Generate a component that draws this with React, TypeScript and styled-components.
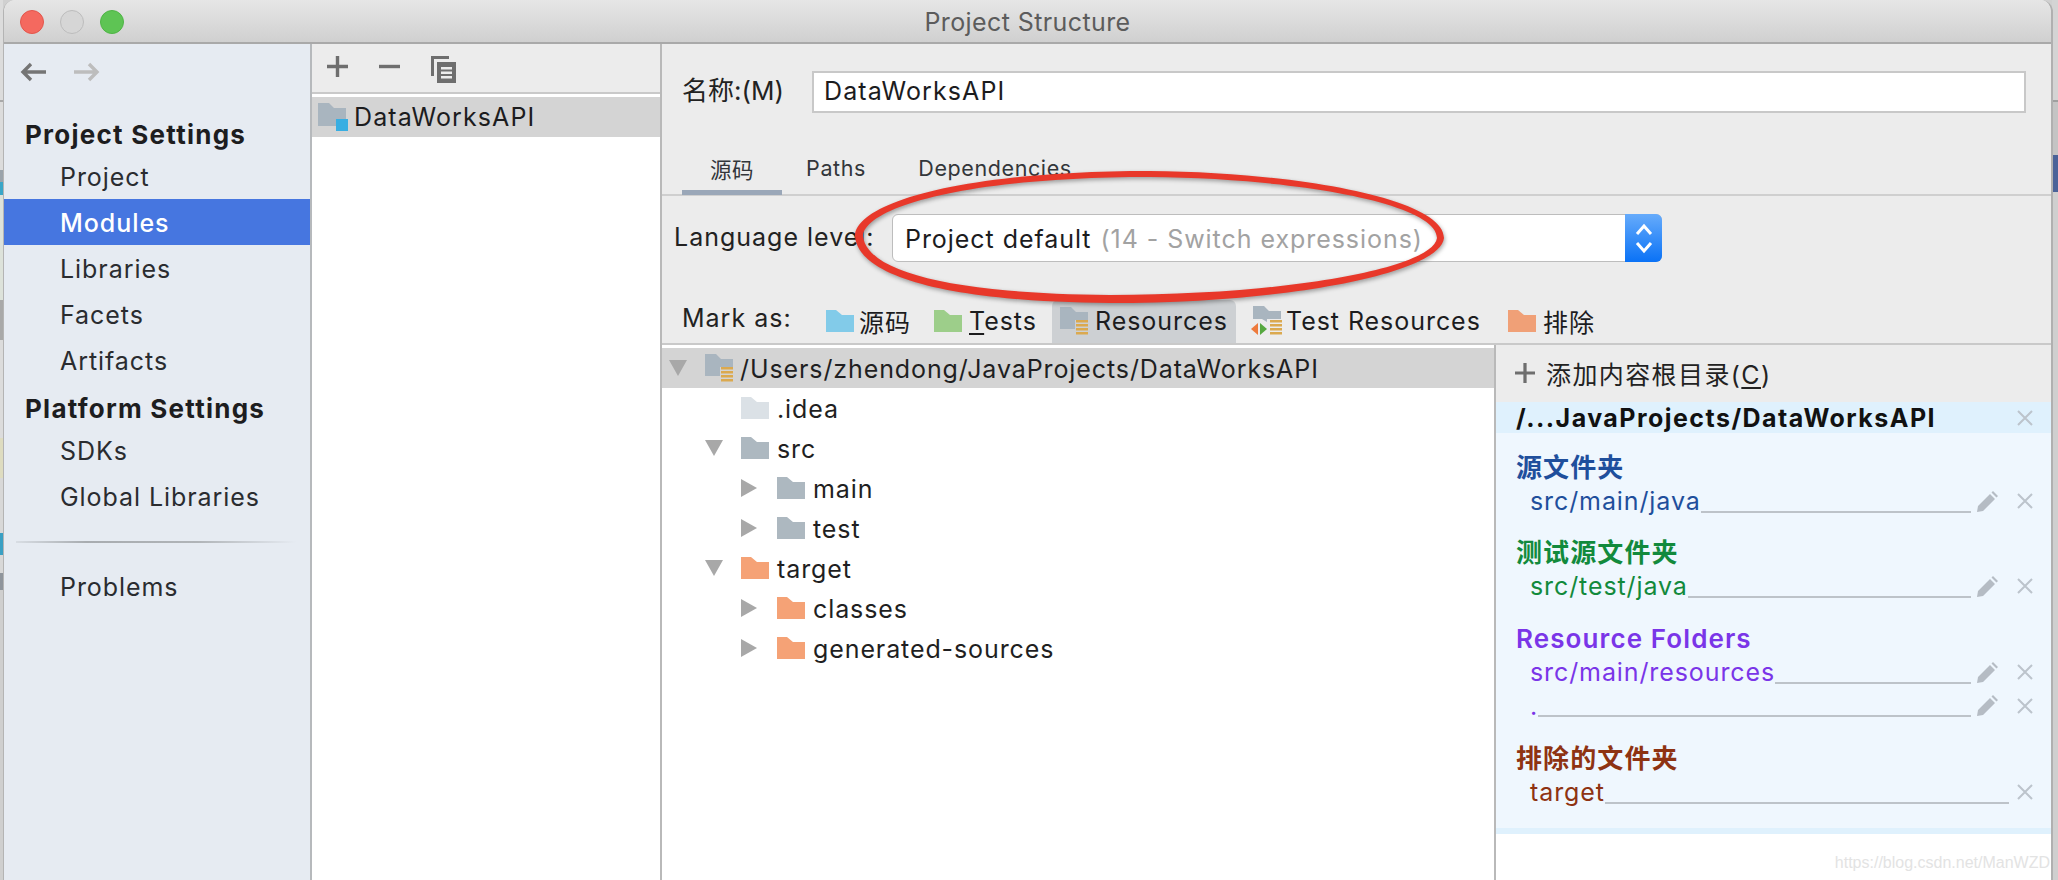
import React from "react";
import styled, { createGlobalStyle } from "styled-components";

const Global = createGlobalStyle`
  html, body { margin: 0; padding: 0; background: #d0d0d0; overflow: hidden; }
  * { box-sizing: border-box; }
  body { font-family: Inter, "Noto Sans CJK SC", "Liberation Sans", sans-serif; color: #1c1c1e; }
`;

const Desktop = styled.div`
  width: 2058px;
  height: 880px;
  overflow: hidden;
  padding: 0 5px 0 3px;
  background:
    linear-gradient(to bottom,
      #dcdcdc 0 100px, #a9a9a9 100px 102px, #dcdcdc 102px 170px, #9aa3ab 170px 182px, #3aa6c8 182px 195px,
      #dde2da 195px 300px, #a9a9a9 300px 340px, #dcdcdc 340px 438px, #dedcc0 438px 478px, #d8d8d8 478px 533px,
      #3aa0c4 533px 555px, #d8d8d8 555px 573px, #8f959c 573px 590px, #cfcfcf 590px) left / 3px 100% no-repeat,
    linear-gradient(to bottom,
      #d4d4d4 0 100px, #9f9f9f 100px 102px, #c4c4c4 102px 155px, #4a6298 155px 192px, #cfcfcf 192px) right / 6px 100% no-repeat;
`;

const Window = styled.div`
  position: relative;
  width: 100%;
  height: 880px;
  display: flex;
  flex-direction: column;
  background: #ececec;
  border-left: 1px solid #b4b4b4;
  border-right: 2px solid #b0b0b0;
  border-radius: 12px 12px 0 0;
  overflow: hidden;
`;

const TitleBar = styled.div`
  position: relative;
  flex: none;
  height: 44px;
  display: flex;
  align-items: center;
  justify-content: center;
  background: linear-gradient(#e6e6e6, #d0d0d0);
  border-bottom: 2px solid #a9a9a9;
`;

const TitleText = styled.span`
  padding-top: 2px;
  font-size: 25px;
  line-height: 42px;
  color: #5c5c5c;
  letter-spacing: 0.4px;
`;

const Lights = styled.div`
  position: absolute;
  left: 16px;
  top: 10px;
  display: flex;
  gap: 16px;
`;

const Light = styled.span<{ $c: string; $b: string }>`
  width: 24px;
  height: 24px;
  border-radius: 50%;
  background: ${(p) => p.$c};
  border: 1px solid ${(p) => p.$b};
`;

const Body = styled.div`
  flex: 1;
  min-height: 0;
  display: flex;
`;

const Sidebar = styled.nav`
  flex: none;
  width: 308px;
  background: #e6ebf2;
  border-right: 2px solid #b6b9bc;
  display: flex;
  flex-direction: column;
`;

const NavArrows = styled.div`
  flex: none;
  height: 68px;
  padding: 18px 0 0 16px;
  display: flex;
  gap: 28px;
  align-items: flex-start;
`;

const GroupTitle = styled.div<{ $h: number; $pt: number }>`
  height: ${(p) => p.$h}px;
  padding: ${(p) => p.$pt}px 0 0 21px;
  font-size: 26px;
  line-height: 36px;
  font-weight: 700;
  color: #1d1d1f;
  letter-spacing: 1.25px;
`;

const NavItem = styled.div<{ $active?: boolean }>`
  height: 46px;
  padding-left: 56px;
  line-height: 48px;
  font-size: 25px;
  letter-spacing: 0.94px;
  color: ${(p) => (p.$active ? "#fff" : "#2a2c30")};
  background: ${(p) => (p.$active ? "#4676e0" : "transparent")};
  font-weight: ${(p) => (p.$active ? 500 : 400)};
`;

const NavDivider = styled.div`
  height: 2px;
  margin: 22px 14px 20px 12px;
  background: linear-gradient(to right, rgba(160,165,170,0.2), #a8acb0 25%, #b0b4b8 65%, rgba(160,165,170,0));
`;

const ModulePanel = styled.section`
  flex: none;
  width: 350px;
  background: #fff;
  border-right: 2px solid #b9b9b9;
  display: flex;
  flex-direction: column;
`;

const ModuleToolbar = styled.div`
  flex: none;
  height: 50px;
  padding: 12px 0 0 15px;
  display: flex;
  align-items: flex-start;
  gap: 31px;
  background: #ececec;
  border-bottom: 2px solid #c9c9c9;
`;

const ModuleRow = styled.div`
  margin-top: 3px;
  height: 40px;
  padding-left: 6px;
  display: flex;
  align-items: center;
  gap: 6px;
  background: #d4d4d4;
  font-size: 25px;
  letter-spacing: 1.1px;
`;

const Editor = styled.section`
  flex: 1;
  min-width: 0;
  display: flex;
  flex-direction: column;
`;

const NameRow = styled.div`
  flex: none;
  height: 96px;
  padding: 27px 25px 0 20px;
  display: flex;
  align-items: flex-start;
  gap: 28px;
`;

const FieldLabel = styled.span`
  width: 102px;
  font-size: 26px;
  line-height: 40px;
  white-space: nowrap;
  color: #222;
`;

const NameInput = styled.div`
  flex: 1;
  height: 42px;
  padding-left: 10px;
  line-height: 36px;
  font-size: 25px;
  letter-spacing: 1.1px;
  background: #fff;
  border: 2px solid #c8c8c8;
`;

const TabBar = styled.div`
  flex: none;
  height: 56px;
  padding-left: 20px;
  display: flex;
  align-items: stretch;
  border-bottom: 2px solid #cfcfcf;
`;

const Tab = styled.div<{ $active?: boolean; $w: number }>`
  width: ${(p) => p.$w}px;
  height: 55px;
  display: flex;
  justify-content: center;
  align-items: center;
  padding-top: 6px;
  font-size: 21.5px;
  letter-spacing: 0.6px;
  color: #33363a;
  border-bottom: 5px solid ${(p) => (p.$active ? "#9aa7b8" : "transparent")};
`;

const LanguageRow = styled.div`
  flex: none;
  height: 104px;
  padding: 18px 0 0 12px;
  display: flex;
  align-items: flex-start;
  gap: 19px;
`;

const LangLabel = styled.span`
  width: 199px;
  font-size: 25px;
  line-height: 46px;
  letter-spacing: 1px;
  white-space: nowrap;
  color: #222;
`;

const Select = styled.div`
  width: 770px;
  height: 48px;
  display: flex;
  background: #fff;
  border: 1px solid #bdbdbd;
  border-radius: 6px;
`;

const SelectText = styled.div`
  flex: 1;
  padding-left: 12px;
  line-height: 48px;
  font-size: 25px;
  letter-spacing: 0.95px;
  white-space: nowrap;
`;

const Hint = styled.span`
  margin-left: 9px;
  color: #a2a2a2;
`;

const Stepper = styled.div`
  flex: none;
  width: 37px;
  margin: -1px -1px -1px 0;
  display: flex;
  align-items: center;
  justify-content: center;
  background: linear-gradient(#66abfb, #0a72f6);
  border-radius: 0 6px 6px 0;
`;

const MarkRow = styled.div`
  flex: none;
  height: 45px;
  padding-left: 20px;
  display: flex;
  align-items: stretch;
  border-bottom: 2px solid #c9c9c9;
`;

const MarkLabel = styled.span`
  width: 136px;
  font-size: 25px;
  line-height: 36px;
  letter-spacing: 1px;
  white-space: nowrap;
  color: #222;
`;

const MarkItem = styled.div<{ $active?: boolean; $w: number; $inset?: number; $gap?: number }>`
  width: ${(p) => p.$w}px;
  height: 43px;
  padding: 0 0 2px ${(p) => p.$inset ?? 8}px;
  display: flex;
  align-items: center;
  gap: ${(p) => p.$gap ?? 7}px;
  font-size: 25px;
  letter-spacing: 0.95px;
  white-space: nowrap;
  background: ${(p) => (p.$active ? "#cdd0d3" : "transparent")};
  border-radius: ${(p) => (p.$active ? "6px 6px 0 0" : "0")};
  svg { flex: none; }
`;

const Mnemonic = styled.span`
  text-decoration: underline;
  text-underline-offset: 3px;
  text-decoration-thickness: 2px;
`;

const Split = styled.div`
  flex: 1;
  min-height: 0;
  display: flex;
  background: #fff;
`;

const Tree = styled.div`
  flex: none;
  width: 832px;
  padding-top: 3px;
`;

const TreeRow = styled.div<{ $depth: number; $selected?: boolean }>`
  height: 40px;
  padding-left: ${(p) => 7 + p.$depth * 36}px;
  display: flex;
  align-items: center;
  font-size: 25px;
  letter-spacing: 0.9px;
  color: #1f1f22;
  background: ${(p) => (p.$selected ? "#d4d4d4" : "transparent")};
`;

const ArrowSlot = styled.span`
  flex: none;
  width: 36px;
  display: flex;
  align-items: center;
`;

const TreeLabel = styled.span<{ $gap?: number }>`
  margin-left: ${(p) => p.$gap ?? 8}px;
  padding-top: 2px;
  white-space: nowrap;
`;

const ContentPane = styled.aside`
  flex: 1;
  min-width: 0;
  display: flex;
  flex-direction: column;
  border-left: 2px solid #b9b9b9;
`;

const AddRoot = styled.div`
  flex: none;
  height: 57px;
  padding: 0 0 2px 19px;
  display: flex;
  align-items: center;
  gap: 11px;
  background: #ececec;
  font-size: 25px;
  letter-spacing: 1.4px;
  color: #222;
`;

const RootHeader = styled.div`
  flex: none;
  height: 31px;
  padding-left: 20px;
  display: flex;
  align-items: center;
  justify-content: space-between;
  background: #dff1fd;
  font-size: 25px;
  font-weight: 700;
  letter-spacing: 1.45px;
  color: #111;
`;

const RootClose = styled.span`
  margin-right: 18px;
  display: flex;
`;

const Roots = styled.div`
  flex: none;
  height: 401px;
  padding: 17px 0 0 20px;
  background: #eff7fe;
  border-bottom: 6px solid #dff1fd;
`;

const KindTitle = styled.div<{ $color: string; $gap: number }>`
  height: 34px;
  margin-top: ${(p) => p.$gap}px;
  line-height: 36px;
  font-size: 26px;
  font-weight: 600;
  letter-spacing: 1.1px;
  color: ${(p) => p.$color};
`;

const PathRow = styled.div<{ $color: string; $h?: number }>`
  height: ${(p) => p.$h ?? 34}px;
  padding-left: 14px;
  display: flex;
  align-items: center;
  font-size: 25px;
  letter-spacing: 0.9px;
  color: ${(p) => p.$color};
`;

const Leader = styled.span`
  flex: 1;
  align-self: flex-end;
  margin-bottom: 5px;
  border-bottom: 2px solid #bdc3c9;
`;

const PencilSlot = styled.span`
  flex: none;
  margin-left: 6px;
  display: flex;
`;

const CloseSlot = styled.span<{ $gap: number }>`
  flex: none;
  margin: 0 18px 0 ${(p) => p.$gap}px;
  display: flex;
`;

const Watermark = styled.div`
  position: absolute;
  right: 1px;
  bottom: 8px;
  font-family: "Liberation Sans", sans-serif;
  font-size: 16px;
  color: #e3e3e3;
`;

const Annotation = styled.svg`
  position: absolute;
  left: -4px;
  top: 0;
  pointer-events: none;
  filter: drop-shadow(1px 2px 2px rgba(0, 0, 0, 0.35));
`;

const Folder = ({ c }: { c: string }) => (
  <svg width="28" height="22" viewBox="0 0 28 22">
    <path d="M0 22V0h10l6 5h12v17z" fill={c} />
  </svg>
);

const Bars = ({ x, y }: { x: number; y: number }) => (
  <g fill="#dba94f">
    <rect x={x} y={y} width="12" height="2.5" />
    <rect x={x} y={y + 4} width="12" height="2.5" />
    <rect x={x} y={y + 8} width="12" height="2.5" />
    <rect x={x} y={y + 12} width="12" height="2.5" />
  </g>
);

const ModuleFolder = () => (
  <svg width="30" height="28" viewBox="0 0 30 28">
    <path d="M0 23V0h11l5 5h12v18z" fill="#a9b5bf" />
    <rect x="18" y="16" width="12" height="12" fill="#38aee2" />
  </svg>
);

const ResourceFolder = () => (
  <svg width="30" height="28" viewBox="0 0 30 28">
    <path d="M0 22V0h11l5 5h12v8H15v9z" fill="#a9b5bf" />
    <Bars x={16} y={13} />
  </svg>
);

const TestResourceFolder = () => (
  <svg width="32" height="30" viewBox="0 0 32 30">
    <path d="M2 22V0h11l5 5h12v8H16v3l-5-3H2z" fill="#a9b5bf" />
    <path d="M7 17v12L0 23z" fill="#ee7a3c" />
    <path d="M9 17v12l7-6z" fill="#56a83f" />
    <Bars x={19} y={14} />
  </svg>
);

const Back = ({ c }: { c: string }) => (
  <svg width="26" height="20" viewBox="0 0 26 20">
    <path d="M26 10H3M11 2l-8 8 8 8" fill="none" stroke={c} strokeWidth="3.4" />
  </svg>
);

const Forward = ({ c }: { c: string }) => (
  <svg width="26" height="20" viewBox="0 0 26 20">
    <path d="M0 10h23M15 2l8 8-8 8" fill="none" stroke={c} strokeWidth="3.4" />
  </svg>
);

const Plus = ({ s = 21, c = "#6e6e6e" }: { s?: number; c?: string }) => (
  <svg width={s} height={s} viewBox="0 0 21 21">
    <path d="M10.5 0v21M0 10.5h21" stroke={c} strokeWidth="3.4" />
  </svg>
);

const MinusIcon = () => (
  <svg width="21" height="21" viewBox="0 0 21 21">
    <path d="M0 10.5h21" stroke="#6e6e6e" strokeWidth="3.4" />
  </svg>
);

const CopyIcon = () => (
  <svg width="25" height="27" viewBox="0 0 25 27">
    <path d="M0 0h18v3H3v17H0z" fill="#6e6e6e" />
    <path fillRule="evenodd" d="M6 6h19v21H6zM10 11v2.4h11V11zM10 15.5v2.4h11v-2.4zM10 20v2.4h11V20z" fill="#6e6e6e" />
  </svg>
);

const TriDown = () => (
  <svg width="18" height="16" viewBox="0 0 18 16">
    <path d="M0 0h18L9 16z" fill="#a8a8a8" />
  </svg>
);

const TriRight = () => (
  <svg width="16" height="18" viewBox="0 0 16 18">
    <path d="M0 0l16 9-16 9z" fill="#a8a8a8" />
  </svg>
);

const Pencil = () => (
  <svg width="21" height="21" viewBox="0 0 21 21">
    <path d="M0 21l1-6L13 3l5 5L6 20zM14.5 1.5L16 0l5 5-1.5 1.5z" fill="#b5bcc4" />
  </svg>
);

const Cross = () => (
  <svg width="16" height="16" viewBox="0 0 16 16">
    <path d="M1 1l14 14M15 1L1 15" stroke="#bcc4cc" strokeWidth="2" fill="none" />
  </svg>
);

const Updown = () => (
  <svg width="18" height="36" viewBox="0 0 18 36">
    <path d="M2 14l7-8 7 8M2 23l7 8 7-8" fill="none" stroke="#fff" strokeWidth="3" />
  </svg>
);

type Tr = { label: string; depth: number; arrow?: "down" | "right"; color: string };

const treeRows: Tr[] = [
  { label: ".idea", depth: 1, color: "#dbe1e6" },
  { label: "src", depth: 1, arrow: "down", color: "#adb8c0" },
  { label: "main", depth: 2, arrow: "right", color: "#adb8c0" },
  { label: "test", depth: 2, arrow: "right", color: "#adb8c0" },
  { label: "target", depth: 1, arrow: "down", color: "#f5a276" },
  { label: "classes", depth: 2, arrow: "right", color: "#f5a276" },
  { label: "generated-sources", depth: 2, arrow: "right", color: "#f5a276" },
];

const PathLine = ({ text, color, pencil = true, h }: { text: string; color: string; pencil?: boolean; h?: number }) => (
  <PathRow $color={color} $h={h}>
    {text}
    <Leader />
    {pencil && (
      <PencilSlot>
        <Pencil />
      </PencilSlot>
    )}
    <CloseSlot $gap={pencil ? 19 : 8}>
      <Cross />
    </CloseSlot>
  </PathRow>
);

export default function App() {
  return (
    <>
      <Global />
      <Desktop>
        <Window>
          <TitleBar>
            <Lights>
              <Light $c="#f4695f" $b="#e2564c" />
              <Light $c="#d6d6d6" $b="#bcbcbc" />
              <Light $c="#5ec454" $b="#4fb446" />
            </Lights>
            <TitleText>Project Structure</TitleText>
          </TitleBar>
          <Body>
            <Sidebar>
              <NavArrows>
                <Back c="#757575" />
                <Forward c="#bdbdbd" />
              </NavArrows>
              <GroupTitle $h={41} $pt={5}>Project Settings</GroupTitle>
              <NavItem>Project</NavItem>
              <NavItem $active>Modules</NavItem>
              <NavItem>Libraries</NavItem>
              <NavItem>Facets</NavItem>
              <NavItem>Artifacts</NavItem>
              <GroupTitle $h={44} $pt={8}>Platform Settings</GroupTitle>
              <NavItem>SDKs</NavItem>
              <NavItem>Global Libraries</NavItem>
              <NavDivider />
              <NavItem>Problems</NavItem>
            </Sidebar>
            <ModulePanel>
              <ModuleToolbar>
                <Plus />
                <MinusIcon />
                <CopyIcon />
              </ModuleToolbar>
              <ModuleRow>
                <ModuleFolder />
                DataWorksAPI
              </ModuleRow>
            </ModulePanel>
            <Editor>
              <NameRow>
                <FieldLabel>名称:(M)</FieldLabel>
                <NameInput>DataWorksAPI</NameInput>
              </NameRow>
              <TabBar>
                <Tab $active $w={100}>源码</Tab>
                <Tab $w={108}>Paths</Tab>
                <Tab $w={210}>Dependencies</Tab>
              </TabBar>
              <LanguageRow>
                <LangLabel>Language level:</LangLabel>
                <Select>
                  <SelectText>
                    Project default<Hint>(14 - Switch expressions)</Hint>
                  </SelectText>
                  <Stepper>
                    <Updown />
                  </Stepper>
                </Select>
              </LanguageRow>
              <MarkRow>
                <MarkLabel>Mark as:</MarkLabel>
                <MarkItem $w={108} $gap={5}>
                  <Folder c="#82cbe9" />
                  源码
                </MarkItem>
                <MarkItem $w={126}>
                  <Folder c="#9dce8a" />
                  <span><Mnemonic>T</Mnemonic>ests</span>
                </MarkItem>
                <MarkItem $active $w={184} $gap={5}>
                  <ResourceFolder />
                  Resources
                </MarkItem>
                <MarkItem $w={264} $inset={15} $gap={3}>
                  <TestResourceFolder />
                  Test Resources
                </MarkItem>
                <MarkItem $w={110}>
                  <Folder c="#f0a077" />
                  排除
                </MarkItem>
              </MarkRow>
              <Split>
                <Tree>
                  <TreeRow $depth={0} $selected>
                    <ArrowSlot><TriDown /></ArrowSlot>
                    <ResourceFolder />
                    <TreeLabel $gap={5}>/Users/zhendong/JavaProjects/DataWorksAPI</TreeLabel>
                  </TreeRow>
                  {treeRows.map((r) => (
                    <TreeRow key={r.label} $depth={r.depth}>
                      <ArrowSlot>
                        {r.arrow === "down" && <TriDown />}
                        {r.arrow === "right" && <TriRight />}
                      </ArrowSlot>
                      <Folder c={r.color} />
                      <TreeLabel>{r.label}</TreeLabel>
                    </TreeRow>
                  ))}
                </Tree>
                <ContentPane>
                  <AddRoot>
                    <Plus s={20} />
                    <span>添加内容根目录(<Mnemonic>C</Mnemonic>)</span>
                  </AddRoot>
                  <RootHeader>
                    /...JavaProjects/DataWorksAPI
                    <RootClose><Cross /></RootClose>
                  </RootHeader>
                  <Roots>
                    <KindTitle $color="#1f4f9c" $gap={0}>源文件夹</KindTitle>
                    <PathLine text="src/main/java" color="#1f4f9c" />
                    <KindTitle $color="#128a3c" $gap={17}>测试源文件夹</KindTitle>
                    <PathLine text="src/test/java" color="#128a3c" />
                    <KindTitle $color="#7a35e8" $gap={18}>Resource Folders</KindTitle>
                    <PathLine text="src/main/resources" color="#7a35e8" />
                    <PathLine text="." color="#7a35e8" h={33} />
                    <KindTitle $color="#8e3312" $gap={19}>排除的文件夹</KindTitle>
                    <PathLine text="target" color="#8e3312" pencil={false} />
                  </Roots>
                </ContentPane>
              </Split>
            </Editor>
          </Body>
          <Annotation width="2049" height="340" viewBox="0 0 2049 340">
            <path
              fillRule="evenodd"
              d="M855 236C856 203 960 171 1150 171C1292 172 1444 198 1444 238C1440 273 1290 303 1110 303C958 302 858 279 855 236ZM863 236C865 208 962 177 1150 177C1288 178 1437 202 1437 238C1433 268 1288 295 1110 295C962 294 867 274 863 236Z"
              fill="#e8382a"
            />
          </Annotation>
          <Watermark>https://blog.csdn.net/ManWZD</Watermark>
        </Window>
      </Desktop>
    </>
  );
}
